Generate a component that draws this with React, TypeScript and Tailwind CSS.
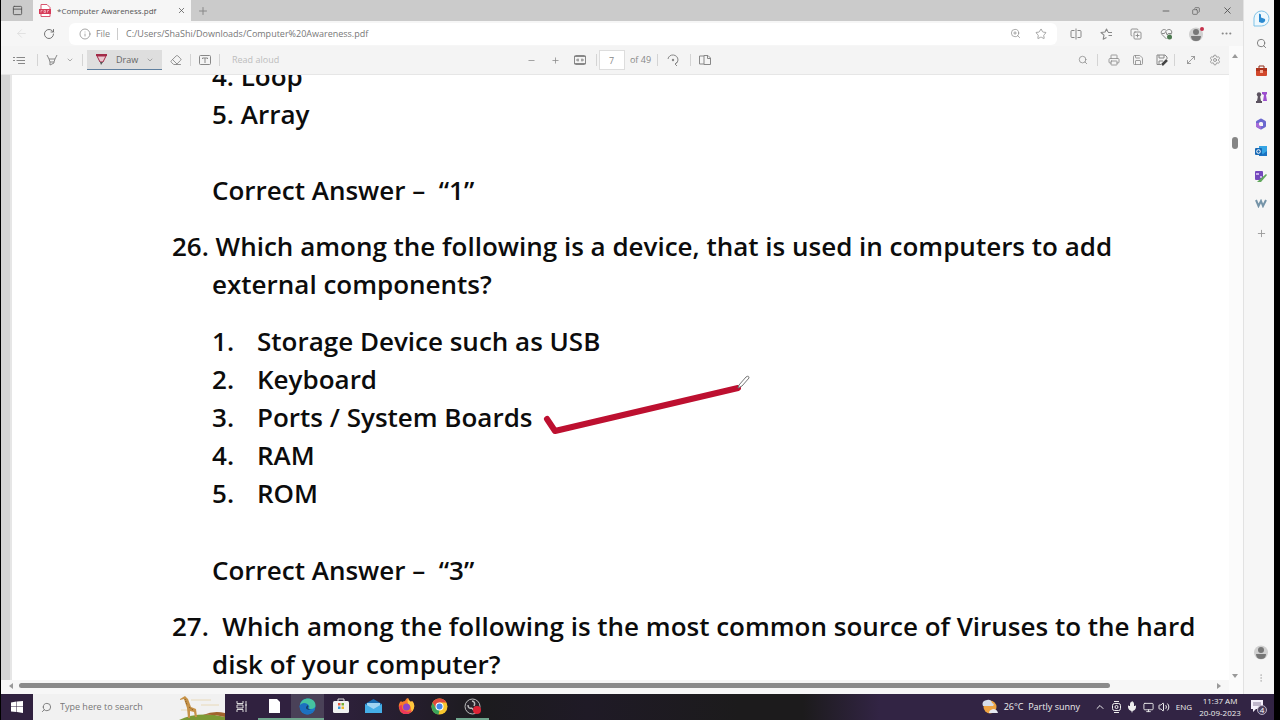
import type { ReactNode } from "react";
import {
  X, Plus, Minus, ArrowLeft, RotateCw, Info, ChevronDown, ChevronUp, Eraser, Search,
  Printer, Save, Settings, ZoomIn, Star, Ellipsis, Copy, CopyPlus,
  MoveDiagonal, EllipsisVertical, Mic, Monitor, Volume2, PanelTop,
} from "lucide-react";

type IconProps = { label: string; children: ReactNode; className?: string };

function IconButton({ label, children, className = "" }: IconProps) {
  return (
    <button type="button" aria-label={label} className={`flex shrink-0 items-center justify-center ${className}`}>
      {children}
    </button>
  );
}

function Divider() {
  return <span className="h-3 w-px shrink-0 bg-[#d4d4d4]" />;
}

function PdfIcon() {
  return (
    <svg width="12" height="13" viewBox="0 0 12 13" aria-hidden="true">
      <path d="M2 .5h6l3 3v9H2z" fill="#fff" stroke="#d8566f" />
      <path d="M0 5h12v5H0z" fill="#d63a58" />
      <path d="M2 8.5V6.5h1.5M5 6.5v2h1.5v-2zM8.5 8.5v-2H10" stroke="#f7c8d0" fill="none" strokeWidth=".7" />
    </svg>
  );
}

function TabStrip() {
  return (
    <header className="flex h-[21px] shrink-0 bg-[#cbcbcb] text-[#555]">
      <IconButton label="Tab actions" className="w-8">
        <PanelTop size={11} strokeWidth={2} />
      </IconButton>
      <div className="flex w-[158px] items-center bg-[#f6f6f6] pl-[6px]">
        <PdfIcon />
        <span className="ml-[6px] flex-1 text-[8px] leading-3 whitespace-nowrap">*Computer Awareness.pdf</span>
        <IconButton label="Close tab" className="w-5"><X size={9} /></IconButton>
      </div>
      <IconButton label="New tab" className="w-6 text-[#888]"><Plus size={12} /></IconButton>
      <div className="ml-auto flex">
        <IconButton label="Minimize" className="w-[30px]"><Minus size={10} /></IconButton>
        <IconButton label="Restore" className="w-[30px]"><Copy size={8} className="-scale-x-100" /></IconButton>
        <IconButton label="Close window" className="w-8"><X size={11} /></IconButton>
      </div>
    </header>
  );
}

function AddressBar() {
  return (
    <div className="flex h-[25px] shrink-0 items-center bg-[#f6f6f6] text-[#888]">
      <IconButton label="Back" className="ml-3 w-4 text-[#ddd]"><ArrowLeft size={13} strokeWidth={1.5} /></IconButton>
      <IconButton label="Refresh" className="ml-3 w-4 text-[#666]"><RotateCw size={12} strokeWidth={1.8} /></IconButton>
      <div className="ml-3 flex h-[22px] flex-1 items-center rounded-md bg-white pl-[10px]">
        <Info size={12} strokeWidth={1.5} />
        <label htmlFor="address" className="w-6 text-center text-[9px]">File</label>
        <span className="ml-[2px] h-3 w-px bg-[#ccc]" />
        <input id="address" defaultValue="C:/Users/ShaShi/Downloads/Computer%20Awareness.pdf" className="ml-2 min-w-0 flex-1 bg-transparent text-[9px] text-[#777] outline-none" />
        <IconButton label="Zoom" className="w-5"><ZoomIn size={11} strokeWidth={1.5} /></IconButton>
        <IconButton label="Add to favorites" className="mx-2 w-4"><Star size={12} strokeWidth={1.5} /></IconButton>
      </div>
      <div className="flex items-center pr-[2px] pl-1">
        <IconButton label="Split screen" className="w-[30px]"><SplitIcon /></IconButton>
        <IconButton label="Favorites" className="w-[30px]"><FavoritesIcon /></IconButton>
        <IconButton label="Collections" className="w-[30px]"><CopyPlus size={12} strokeWidth={1.8} /></IconButton>
        <IconButton label="Browser essentials" className="w-[30px]"><EssentialsIcon /></IconButton>
        <IconButton label="Profile" className="w-[30px]"><Avatar alert /></IconButton>
        <IconButton label="Settings and more" className="w-[30px]"><Ellipsis size={13} /></IconButton>
      </div>
    </div>
  );
}

function SplitIcon() {
  return (
    <svg width="12" height="12" viewBox="0 0 12 12" fill="none" stroke="currentColor" aria-hidden="true">
      <path d="M4.500 2.500H2q-1 0-1 1v5q0 1 1 1h2.500M7.500 2.500H10q1 0 1 1v5q0 1-1 1H7.500M6 .5v11" />
    </svg>
  );
}

function FavoritesIcon() {
  return (
    <svg width="13" height="12" viewBox="0 0 13 12" fill="none" stroke="currentColor" aria-hidden="true">
      <path d="M8 4 6.5 1 5 4 1 4.5l3 2.700-.8 4L6.500 9.500M8 4.500h4M8.500 7.500H12" strokeWidth="1.1" strokeLinejoin="round" />
    </svg>
  );
}

function EssentialsIcon() {
  return (
    <svg width="13" height="12" viewBox="0 0 13 12" fill="none" stroke="currentColor" aria-hidden="true">
      <path d="M6.5 11 2 6.5C-.5 3.500 3.500-.5 6.500 2.700 9.500-.5 13.500 3 11 6.500M2 5.500h2.500l1.200-2 1.500 3.500 1-1.500H11" />
      <circle cx="9.500" cy="9" r="2.500" fill="#4d7a50" stroke="none" />
    </svg>
  );
}

function Avatar({ alert = false }: { alert?: boolean }) {
  return (
    <svg width="17" height="16" viewBox="0 0 17 16" aria-hidden="true">
      <circle cx="8" cy="8.500" r="7" fill="#d0d0d0" />
      <circle cx="8" cy="6" r="3" fill="#777" />
      <path d="M3 10h10q0 5-5 5t-5-5z" fill="#777" />
      {alert && <circle cx="14" cy="3" r="2" fill="#c4314b" />}
    </svg>
  );
}

function PdfToolbar() {
  return (
    <div className="flex h-7 w-full shrink-0 items-center bg-[#f4f4f4] text-[9px] text-[#888]">
      <div className="flex h-full flex-1 items-center">
        <IconButton label="Contents" className="mr-2 ml-2 w-5">
          <svg width="12" height="9" viewBox="0 0 12 9" fill="none" stroke="currentColor" aria-hidden="true">
            <path d="M0 1.500h2M3.500 1.500H12M3.500 4.500H12M5 7.500h7M0 4.500h2" />
          </svg>
        </IconButton>
        <Divider />
        <IconButton label="Highlight" className="ml-1 w-5">
          <svg width="12" height="12" viewBox="0 0 12 12" fill="none" stroke="currentColor" aria-hidden="true">
            <path d="M1 1l2 4h6l2-4M3 5l1 3h4l1-3M4 8v3l4-2V8" />
          </svg>
        </IconButton>
        <IconButton label="Highlight options" className="mr-1 w-4"><ChevronDown size={8} /></IconButton>
        <Divider />
        <div className="ml-1 flex h-5 w-[75px] items-center border-b border-[#5f7f9f] bg-[#dedede]">
          <button type="button" className="flex flex-1 items-center gap-2 pl-2 text-[#666]">
            <svg width="13" height="12" viewBox="0 0 13 12" aria-hidden="true">
              <path d="M1 1h11" stroke="#a32b48" strokeWidth="2" />
              <path d="M2 2h9L8 8H5z" fill="#e9c8d0" stroke="#a32b48" />
              <path d="M5 8h3l-2 3z" fill="#555" />
            </svg>
            Draw
          </button>
          <IconButton label="Draw options" className="w-6"><ChevronDown size={8} /></IconButton>
        </div>
        <IconButton label="Erase" className="mx-1 w-5"><Eraser size={12} strokeWidth={1.8} /></IconButton>
        <Divider />
        <IconButton label="Add text" className="mx-1 w-5">
          <svg width="12" height="10" viewBox="0 0 12 10" fill="none" stroke="currentColor" aria-hidden="true">
            <rect x=".5" y=".5" width="11" height="9" rx="1" /><path d="M3.500 4V3h5v1M6 3v5" />
          </svg>
        </IconButton>
        <Divider />
        <button type="button" className="ml-3 leading-3 text-[#bdbdbd]">Read aloud</button>
      </div>
      <div className="flex items-center pl-2">
        <IconButton label="Zoom out" className="w-6"><Minus size={9} /></IconButton>
        <IconButton label="Zoom in" className="w-6"><Plus size={9} /></IconButton>
        <IconButton label="Fit to width" className="mr-1 w-6">
          <svg width="12" height="10" viewBox="0 0 12 10" fill="none" stroke="currentColor" aria-hidden="true">
            <rect x=".5" y=".5" width="11" height="9" rx="1" /><path d="M0 1.500h12M0 8.500h12M2 5h3M7 5h3M4 3.500v3M8 3.500v3" />
          </svg>
        </IconButton>
        <Divider />
        <input aria-label="Page number" defaultValue="7" className="mr-1 ml-[2px] h-5 w-[26px] border border-[#ddd] bg-white text-center text-[9px]" />
        <span className="mr-1 w-6 text-center leading-3 whitespace-nowrap">of 49</span>
        <Divider />
        <IconButton label="Rotate" className="mx-1 w-6"><RotateIcon /></IconButton>
        <Divider />
        <IconButton label="Page layout" className="mx-1 w-5"><PagesIcon /></IconButton>
      </div>
      <div className="flex flex-1 items-center justify-end">
        <IconButton label="Find" className="mr-1 w-5"><Search size={10} strokeWidth={1.8} /></IconButton>
        <Divider />
        <IconButton label="Print" className="ml-1 w-6"><Printer size={12} strokeWidth={1.6} /></IconButton>
        <IconButton label="Save" className="w-6"><Save size={12} strokeWidth={1.6} /></IconButton>
        <IconButton label="Save as" className="w-6">
          <svg width="12" height="12" viewBox="0 0 12 12" fill="none" stroke="currentColor" aria-hidden="true">
            <path d="M5 10.500H1V1h8l2 2v2M3 1v3h5V1M3 10V7h4" /><path d="M6 11l5-5" stroke="#444" strokeWidth="2.5" />
          </svg>
        </IconButton>
        <Divider />
        <IconButton label="Full screen" className="ml-1 w-6"><MoveDiagonal size={12} strokeWidth={1.6} /></IconButton>
        <IconButton label="PDF settings" className="mr-[2px] w-6"><Settings size={12} strokeWidth={1.6} /></IconButton>
      </div>
    </div>
  );
}

function RotateIcon() {
  return (
    <svg width="13" height="12" viewBox="0 0 13 12" fill="none" stroke="currentColor" aria-hidden="true">
      <path d="M1 5C2-1 11 0 11 6q0 3-3 4M10 8l-2 2 2 2" /><circle cx="6" cy="6" r="1.2" fill="currentColor" stroke="none" />
    </svg>
  );
}

function PagesIcon() {
  return (
    <svg width="12" height="10" viewBox="0 0 12 10" fill="none" stroke="currentColor" aria-hidden="true">
      <path d="M5 1H.5v8H5M5 .5h4l2.500 2.500v6.500H5zM8.500.5V3.500h3" />
    </svg>
  );
}

function Options({ items }: { items: string[] }) {
  return (
    <ol>
      {items.map((item, i) => (
        <li key={item} className="flex">
          <span className="w-[45px] shrink-0">{i + 1}.</span>
          {item}
        </li>
      ))}
    </ol>
  );
}

function PageContent() {
  return (
    <article className="-mt-[18px] pl-[200px] text-[26px] leading-[38px] font-semibold whitespace-nowrap text-[#0c0c0c]">
      <p>4. Loop</p>
      <p>5. Array</p>
      <p className="mt-[38px]">Correct Answer –&nbsp; “1”</p>
      <p className="mt-[18px] -indent-10">
        26. Which among the following is a device, that is used in computers to add
        <br />
        external components?
      </p>
      <div className="relative mt-[19px]">
        <Options items={["Storage Device such as USB", "Keyboard", "Ports / System Boards", "RAM", "ROM"]} />
        <svg className="absolute top-[50px] left-[330px]" width="212" height="66" viewBox="0 0 212 66" fill="none" aria-hidden="true">
          <path d="M5 47l8 12L196 16" stroke="#bd1030" strokeWidth="6" strokeLinecap="round" strokeLinejoin="round" />
          <path d="M197 13l7-8q3-2 3 1l-7 8-4 2z" fill="#fff" stroke="#777" />
        </svg>
      </div>
      <p className="mt-[39px]">Correct Answer –&nbsp; “3”</p>
      <p className="mt-[18px] -indent-10">
        27.&nbsp; Which among the following is the most common source of Viruses to the hard
        <br />
        disk of your computer?
      </p>
    </article>
  );
}

function Sidebar() {
  return (
    <aside className="flex w-[31px] shrink-0 flex-col items-center border-l border-[#e2e2e2] bg-[#f6f6f6] pt-[6px] pl-1 text-[#777]">
      <IconButton label="Bing" className="h-6">
        <svg width="17" height="17" viewBox="0 0 17 17" aria-hidden="true">
          <path d="M1 16V8a7.500 7.500 0 1 1 7.500 8z" fill="#eef8fd" stroke="#7fc3e8" />
          <path d="M6 3.500l2 1v3l4 1.500q1 3-3 4L6 12z" fill="#2c8ad0" />
        </svg>
      </IconButton>
      <IconButton label="Search" className="h-[27px]"><Search size={11} /></IconButton>
      <IconButton label="Shopping" className="h-[27px]">
        <svg width="13" height="12" viewBox="0 0 13 12" aria-hidden="true">
          <path d="M4 3V1h5v2" fill="none" stroke="#8f2c18" /><rect x="1" y="3" width="11" height="8" rx="1" fill="#d1472b" />
          <path d="M1 3h11v3H1z" fill="#ad321c" /><path d="M5 5h3v3H5z" fill="#f4b19c" />
        </svg>
      </IconButton>
      <IconButton label="Games" className="h-[27px]">
        <svg width="13" height="13" viewBox="0 0 13 13" aria-hidden="true">
          <circle cx="4" cy="3.500" r="2.200" fill="#5b5360" /><path d="M3 5h2l1 5h1v2H1v-2h1z" fill="#5b5360" />
          <path d="M7 1h5v2l-1 1 1 6H8l1-6-2-1z" fill="#9c4fce" />
        </svg>
      </IconButton>
      <IconButton label="Microsoft 365" className="h-[26px]">
        <svg width="12" height="12" viewBox="0 0 12 12" fill="none" aria-hidden="true">
          <path d="M6 2l3.500 2v4L6 10 2.500 8V4z" stroke="#6b68cf" strokeWidth="3" strokeLinejoin="round" />
          <path d="M6 10L2.500 8V5" stroke="#a66bd8" strokeWidth="3" />
        </svg>
      </IconButton>
      <IconButton label="Outlook" className="h-[27px]">
        <svg width="12" height="12" viewBox="0 0 12 12" aria-hidden="true">
          <rect x="4" y="1" width="8" height="10" fill="#35a4e4" /><path d="M4 7l4 2 4-3v5H4z" fill="#1b73c2" />
          <rect y="3" width="7" height="7" rx="1" fill="#1769b5" /><circle cx="3.500" cy="6.500" r="1.800" fill="none" stroke="#fff" />
        </svg>
      </IconButton>
      <IconButton label="Designer" className="h-[26px]">
        <svg width="12" height="12" viewBox="0 0 12 12" aria-hidden="true">
          <rect width="8" height="9" rx="1" fill="#7448bd" /><path d="M1 2h3v2H1zM5 5h2v2H5z" fill="#c8b0ea" />
          <path d="M3 10l8-7 1 1-6 7H2z" fill="#62a85d" />
        </svg>
      </IconButton>
      <IconButton label="Word" className="h-[27px]">
        <svg width="12" height="9" viewBox="0 0 12 9" fill="none" aria-hidden="true">
          <path d="M1 1l2.500 6L6 2l2 5 3-6" stroke="#7594a8" strokeWidth="2" />
        </svg>
      </IconButton>
      <IconButton label="Customize" className="h-8 text-[#999]"><Plus size={11} /></IconButton>
      <IconButton label="Account" className="mt-auto h-6"><Avatar /></IconButton>
      <IconButton label="Sidebar options" className="mb-[2px] h-7 text-[#bbb]"><EllipsisVertical size={10} /></IconButton>
    </aside>
  );
}

function Giraffe() {
  return (
    <svg width="48" height="25" viewBox="0 0 48 25" aria-hidden="true">
      <path d="M14 5h20M24 10h18M4 15h14" stroke="#e8d9b8" />
      <path d="M2 25q20-9 46-3v3z" fill="#7c9a35" /><path d="M26 20q11-5 22-2v4q-12-3-22-2z" fill="#a1642d" />
      <path d="M3 4l5-3 3 3 3 8 5 2 1 8h-2l-1-5-4-1v7h-2l-1-10-3-9-4 1z" fill="#c69247" />
      <path d="M8 4l2 6M12 12l4 3" stroke="#7d5425" strokeDasharray="1 1" />
    </svg>
  );
}

function TaskIcon({ label, children, className = "" }: IconProps) {
  return <IconButton label={label} className={`w-[33px] border-b-2 ${className || "border-transparent"}`}>{children}</IconButton>;
}

function Taskbar() {
  return (
    <footer className="flex h-[26px] shrink-0 bg-[linear-gradient(to_right,#30213f_25%,#1c1b1e_38%,#1f1a26_46%,#1c1b1c_58%,#1c1b1c_63%,#322444_69%)] text-[9px] text-[#eee]">
      <IconButton label="Start" className="w-8">
        <svg width="12" height="12" viewBox="0 0 12 12" fill="#fff" aria-hidden="true">
          <path d="M0 1.500l5.500-1v5H0zM6 .5l6-.5v5.500H6zM0 6h5.500v5L0 10.500zM6 6h6v6l-6-1z" />
        </svg>
      </IconButton>
      <div className="flex w-48 items-center bg-[#f1f1f1] pl-2 text-[#777]">
        <Search size={11} className="-scale-x-100" />
        <input aria-label="Search Windows" placeholder="Type here to search" className="ml-2 w-0 flex-1 bg-transparent text-[9px] outline-none placeholder:text-[#777]" />
        <Giraffe />
      </div>
      <TaskIcon label="Task view">
        <svg width="12" height="11" viewBox="0 0 12 11" fill="none" stroke="#ddd" aria-hidden="true">
          <path d="M1 0v2.500h6V0M1 11V8.500h6V11M1 4h6v3H1zM10 0v11M9 4h2" />
        </svg>
      </TaskIcon>
      <TaskIcon label="Document" className="border-[#6fa58d]">
        <svg width="11" height="14" viewBox="0 0 11 14" aria-hidden="true"><path d="M0 0h8l3 3v11H0z" fill="#fff" /></svg>
      </TaskIcon>
      <TaskIcon label="Microsoft Edge" className="border-[#6fa58d] bg-[#4a4158]">
        <svg width="17" height="17" viewBox="0 0 17 17" aria-hidden="true">
          <circle cx="8.500" cy="8.500" r="8" fill="#1b78c8" />
          <path d="M1 7C3-2 16-1 16.500 7q0 4-5 4-3 0-1-2Q9 3 1 7z" fill="#45c3a0" />
          <path d="M1 7q4-4 8 0-4 2-1 5 3 2 7 .500-5 6-10 3Q0 12 1 7z" fill="#1d70c0" />
          <path d="M9 7q1 2-.5 3 1 1.500 4 1-3 1.500-5 0-1.500-2 1.500-4z" fill="#173e68" />
        </svg>
      </TaskIcon>
      <TaskIcon label="Microsoft Store">
        <svg width="16" height="16" viewBox="0 0 16 16" aria-hidden="true">
          <path d="M5 4V1h6v3" fill="none" stroke="#ddd" /><rect y="3" width="16" height="12" rx="1.500" fill="#f1f1f1" />
          <path d="M5 5h2.500v2.500H5z" fill="#e6583c" /><path d="M8.500 5H11v2.500H8.500z" fill="#75af35" />
          <path d="M5 8.500h2.500V11H5z" fill="#369bd8" /><path d="M8.500 8.500H11V11H8.500z" fill="#eeb72c" />
        </svg>
      </TaskIcon>
      <TaskIcon label="Mail">
        <svg width="17" height="15" viewBox="0 0 17 15" aria-hidden="true">
          <path d="M0 5l8.500-5L17 5v9H0z" fill="#176bb0" /><path d="M2 4h13v7H2z" fill="#9fd4f2" /><path d="M0 5l8.500 5L17 5v9H0z" fill="#45aee7" />
        </svg>
      </TaskIcon>
      <TaskIcon label="Firefox">
        <svg width="17" height="17" viewBox="0 0 17 17" aria-hidden="true">
          <path d="M3 3l1 1q2-1 3-1 1-3 3-3 0 2 3 4l1-1q3 3 2 7-2 6-8 6T1 10Q0 6 3 3z" fill="#f7792c" />
          <path d="M10 0q0 2 3 4l1-1q3 3 2 7-1 3-3 4 1-6-3-8-1-3 0-6z" fill="#fdc83d" />
          <circle cx="8.500" cy="9" r="3.500" fill="#8d45cb" /><path d="M1 9q2 8 8 7 4-1 5-4-3 3-7 1T4 7q-2 0-3 2z" fill="#ee365d" />
        </svg>
      </TaskIcon>
      <TaskIcon label="Chrome">
        <svg width="17" height="17" viewBox="0 0 17 17" aria-hidden="true">
          <circle cx="8.500" cy="8.500" r="8" fill="#f8c62d" />
          <path d="M1.500 4.500Q4 .5 8.500.5t7 4h-7l-3.500 6z" fill="#df4a3c" /><path d="M1.500 4.500L5 10.500l3.500 2-1 4Q2 16 .6 10q-.3-3 .9-5.500z" fill="#3ba55b" />
          <circle cx="8.500" cy="8.500" r="4" fill="#fff" /><circle cx="8.500" cy="8.500" r="3" fill="#4587e8" />
        </svg>
      </TaskIcon>
      <TaskIcon label="OBS Studio" className="border-[#6fa58d]">
        <svg width="18" height="17" viewBox="0 0 18 17" fill="none" aria-hidden="true">
          <circle cx="8.500" cy="8.500" r="7.500" fill="#28242c" stroke="#bbb" />
          <path d="M8 3q4 1 2 5M4 7q0 4 4 3M8 10q2 4 4 1" stroke="#bbb" strokeWidth="1.500" /><circle cx="13" cy="12" r="4" fill="#dc2436" />
        </svg>
      </TaskIcon>
      <div className="ml-auto flex items-center">
        <button type="button" className="mr-3 flex items-center gap-1 whitespace-nowrap">
          <svg width="18" height="16" viewBox="0 0 18 16" aria-hidden="true">
            <circle cx="8" cy="8" r="6.500" fill="#eda241" /><path d="M1 7q-2-5 4-6 4-1 5 3 3 1 1 3z" fill="#d5dce8" /><path d="M7 14q0-3 4-4 4 0 5 4z" fill="#e6e8f0" />
          </svg>
          26°C&nbsp; Partly sunny
        </button>
        <IconButton label="Show hidden icons" className="w-4"><ChevronUp size={12} /></IconButton>
        <IconButton label="Meet now" className="w-4">
          <svg width="9" height="12" viewBox="0 0 9 12" fill="none" stroke="#eee" aria-hidden="true"><path d="M2 .5h5M2 11.500h5" /><rect x=".5" y="2.500" width="8" height="7" rx="2" /><circle cx="4.500" cy="6" r="1.500" /></svg>
        </IconButton>
        <IconButton label="Microphone" className="w-4"><Mic size={12} fill="currentColor" /></IconButton>
        <IconButton label="Network" className="w-4"><Monitor size={11} /></IconButton>
        <IconButton label="Volume" className="w-4"><Volume2 size={12} /></IconButton>
        <button type="button" className="w-6 text-[8px]">ENG</button>
        <button type="button" className="w-12 text-[8px] leading-3 whitespace-nowrap">11:37 AM<br />20-09-2023</button>
        <IconButton label="Notifications, 4 new" className="w-[30px]">
          <svg width="18" height="17" viewBox="0 0 18 17" aria-hidden="true">
            <path d="M1 1h12v9H6l-3 3v-3H1z" fill="#f5effb" /><path d="M3 4h8M3 6h8" stroke="#8a7c9c" /><circle cx="12" cy="11" r="4.500" fill="#4b3e5c" stroke="#b9b0c4" />
            <text x="12" y="14" textAnchor="middle" fontSize="8" fill="#fff">4</text>
          </svg>
        </IconButton>
      </div>
    </footer>
  );
}

export default function App() {
  return (
    <div className="flex h-screen flex-col overflow-hidden border-r-[6px] border-l border-black bg-white font-['Open_Sans','Noto_Sans',sans-serif]">
      <div className="flex min-h-0 flex-1">
        <div className="flex min-w-0 flex-1 flex-col">
          <TabStrip />
          <AddressBar />
          <div className="flex min-h-0 flex-1">
            <main className="flex min-w-0 flex-1 flex-col">
              <PdfToolbar />
              <div className="flex min-h-0 flex-1 border-t border-[#e6e6e6]">
                <div className="w-[11px] shrink-0 border-r-2 border-[#e6e6e6] bg-[#d4d4d4]" />
                <div className="min-w-0 flex-1 overflow-hidden"><PageContent /></div>
              </div>
              <div className="flex h-[14px] shrink-0 items-center bg-[#f7f7f7] px-2 pb-[3px]">
                <span className="border-y-[3px] border-r-4 border-y-transparent border-r-[#999]" />
                <span className="mx-[6px] h-[5px] w-9/10 rounded-full bg-[#8a8a8a]" />
                <span className="ml-auto border-y-[3px] border-l-4 border-y-transparent border-l-[#999]" />
              </div>
            </main>
            <div className="flex w-[14px] shrink-0 flex-col items-center bg-[#fbfbfb] py-2 pr-[2px]">
              <span className="border-x-[3px] border-b-4 border-x-transparent border-b-[#999]" />
              <span className="mt-[79px] h-3 w-[6px] rounded-full bg-[#858585]" />
              <span className="mt-auto mb-2 border-x-[3px] border-t-4 border-x-transparent border-t-[#999]" />
            </div>
          </div>
        </div>
        <Sidebar />
      </div>
      <Taskbar />
    </div>
  );
}
